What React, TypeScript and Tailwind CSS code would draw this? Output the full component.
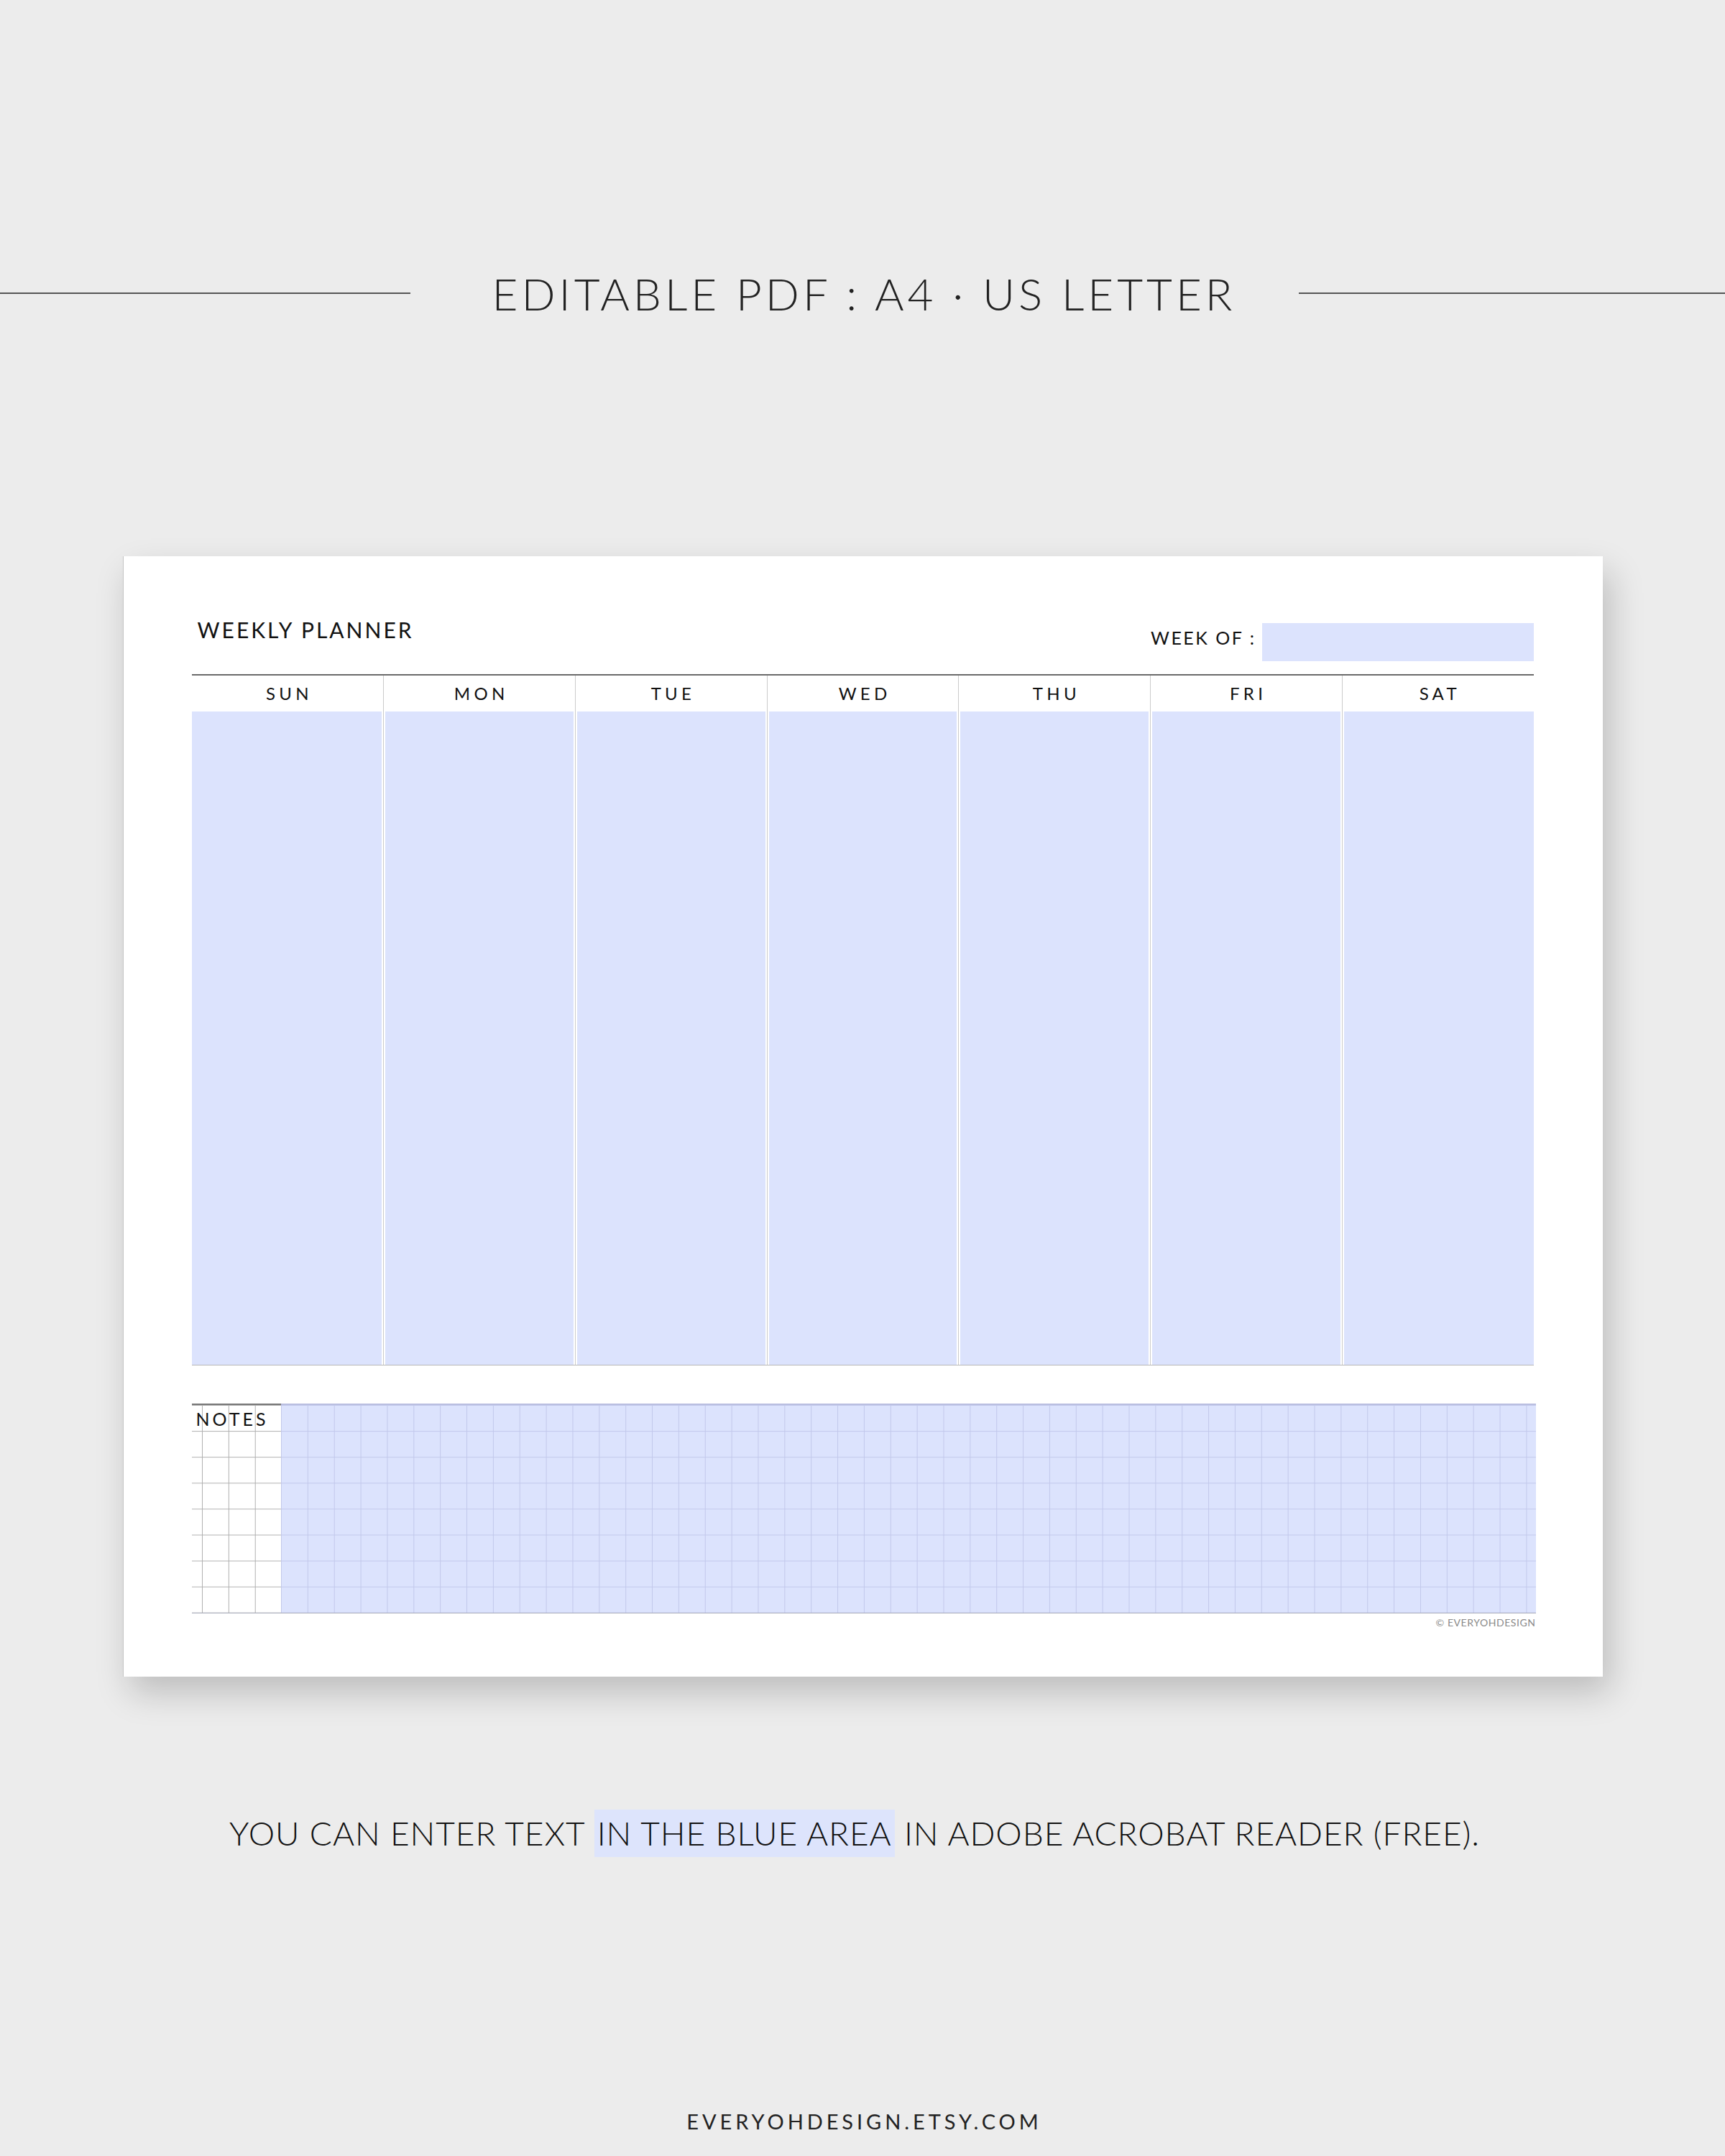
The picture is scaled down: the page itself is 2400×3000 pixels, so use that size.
const days = ["SUN", "MON", "TUE", "WED", "THU", "FRI", "SAT"];

export default function App() {
  return (
    <div className="w-[2400px] h-[3000px] bg-[#ececec] flex flex-col items-center font-['Lato','Liberation_Sans',sans-serif] text-[#1a1a1a]">
      {/* top heading with rules */}
      <div className="w-full mt-[378px] h-[60px] flex items-center">
        <div className="w-[571px] h-[2px] bg-[#555]" />
        <div className="flex-1 pl-[26px] text-center text-[62px] font-light tracking-[0.08em] leading-none text-[#222]">
          EDITABLE PDF : A4 · US LETTER
        </div>
        <div className="w-[593px] h-[2px] bg-[#555]" />
      </div>

      {/* paper */}
      <div className="mt-[336px] w-[2059px] h-[1559px] bg-white border-l border-[#c4c4c4] shadow-[10px_22px_45px_rgba(0,0,0,0.2)] pl-[95px] pr-[93px] flex flex-col">
        <div className="mt-[93px] h-[53px] flex justify-between items-center mr-[3px]">
          <div className="self-start -mt-[9px] ml-[8px] text-[30px] leading-[36px] tracking-[0.1em] text-[#111]">
            WEEKLY PLANNER
          </div>
          <div className="flex items-center gap-[8px] h-full">
            <span className="-mt-[12px] text-[25px] tracking-[0.1em] text-[#111]">WEEK OF :</span>
            <div className="w-[378px] h-full bg-[#dce3fd]" />
          </div>
        </div>

        {/* day columns */}
        <div className="mt-[18px] mr-[3px] grid grid-cols-7 border-t-2 border-[#6a6a6a] border-b border-b-[#b8b8b8]">
          {days.map((d, i) => (
            <div key={d} className={`flex flex-col ${i > 0 ? "border-l border-[#cbcbcb]" : ""}`}>
              <div className="h-[50px] flex items-center justify-center text-[24px] tracking-[0.22em] pl-[0.22em] text-[#111]">
                {d}
              </div>
              <div className={`h-[909px] bg-[#dce3fd] ${i > 0 ? "ml-[2px]" : ""} ${i < 6 ? "mr-[2px]" : ""}`} />
            </div>
          ))}
        </div>

        {/* notes grid */}
        <div className="mt-[53px] flex h-[292px] border-b border-[#a8abbb]">
          <div className="relative w-[124px] border-t-2 border-[#777] bg-[linear-gradient(to_right,#b0b0b0_1px,transparent_1px),linear-gradient(to_bottom,#b0b0b0_1px,transparent_1px)] bg-[size:36.86px_36.1px] bg-[position:14px_0]">
            <span className="absolute left-[6px] top-[4px] text-[25px] leading-[30px] tracking-[0.16em] text-[#111]">
              NOTES
            </span>
          </div>
          <div className="flex-1 border-t-2 border-[#b9bee0] bg-[#dce3fd] bg-[linear-gradient(to_right,#c2c8eb_1px,transparent_1px),linear-gradient(to_bottom,#c2c8eb_1px,transparent_1px)] bg-[size:36.86px_36.1px] bg-[position:0_0]" />
        </div>
        <div className="mt-[5px] text-right text-[14px] leading-[16px] tracking-[0.04em] text-[#8a8a8a]">
          © EVERYOHDESIGN
        </div>
      </div>

      {/* bottom note */}
      <div className="mt-[188px] mr-[22px] h-[60px] flex items-center text-[46px] font-light tracking-[0.02em] leading-none text-[#111]">
        <span>YOU CAN ENTER TEXT&nbsp;</span>
        <span className="bg-[#dde4fc] px-[4px] py-[10px]">IN THE BLUE AREA</span>
        <span>&nbsp;IN ADOBE ACROBAT READER (FREE).</span>
      </div>

      {/* footer */}
      <div className="mt-[351px] text-[29px] tracking-[0.17em] pl-[0.17em] leading-[40px] text-[#222]">
        EVERYOHDESIGN.ETSY.COM
      </div>
    </div>
  );
}
